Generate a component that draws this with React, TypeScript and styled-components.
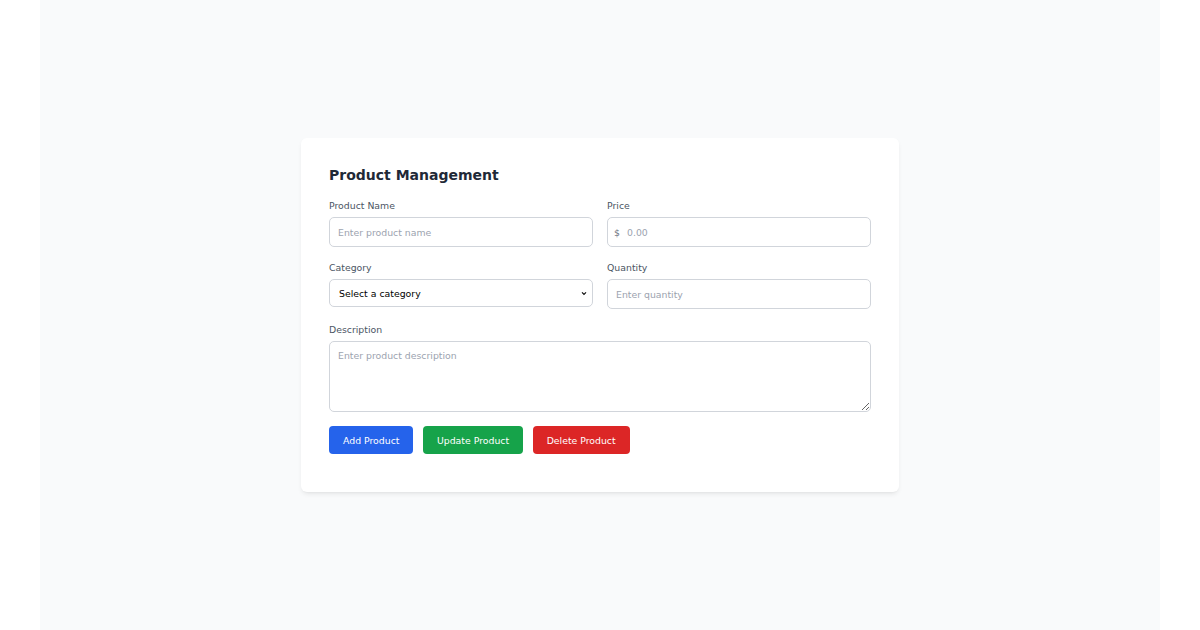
import styled, { createGlobalStyle } from "styled-components";

const GlobalStyle = createGlobalStyle`
  * { box-sizing: border-box; }
  body {
    margin: 0;
    background: #ffffff;
    font-family: "DejaVu Sans", "Noto Sans", sans-serif;
  }
`;

const Page = styled.div`
  width: 1120px;
  min-height: 630px;
  margin: 0 auto;
  background: #f9fafb;
  display: flex;
  align-items: center;
  justify-content: center;
`;

const Card = styled.div`
  width: 598px;
  background: #ffffff;
  border-radius: 6px;
  padding: 27px 28px 38px;
  box-shadow: 0 3px 5px -1px rgba(0, 0, 0, 0.08), 0 2px 3px -2px rgba(0, 0, 0, 0.06);
`;

const Title = styled.h2`
  margin: 0 0 14px;
  font-size: 14px;
  line-height: 20px;
  font-weight: 700;
  color: #1f2937;
`;

const FieldGrid = styled.div`
  display: grid;
  grid-template-columns: 1fr 1fr;
  column-gap: 14px;
  row-gap: 14px;
  margin-bottom: 14px;
  align-items: start;
`;

const Field = styled.div`
  display: flex;
  flex-direction: column;
`;

const Label = styled.label`
  font-size: 9.33px;
  line-height: 14px;
  color: #4b5563;
  margin-bottom: 4px;
`;

const TextInput = styled.input<{ $padLeft?: number }>`
  height: 30px;
  width: 100%;
  border: 1px solid #d1d5db;
  border-radius: 5px;
  padding: 0 8px 0 ${({ $padLeft }) => $padLeft ?? 8}px;
  font-family: inherit;
  font-size: 9.33px;
  color: #111827;
  background: #ffffff;
  outline: none;
  &::placeholder {
    color: #9ca3af;
  }
`;

const AdornedWrap = styled.div`
  position: relative;
`;

const Currency = styled.span`
  position: absolute;
  left: 7px;
  top: 50%;
  transform: translateY(-50%);
  font-size: 9.33px;
  color: #6b7280;
`;

const Select = styled.select`
  appearance: none;
  -webkit-appearance: none;
  display: block;
  height: 28px;
  width: 100%;
  border: 1px solid #d1d5db;
  border-radius: 5px;
  padding: 0 20px 0 9px;
  font-family: inherit;
  font-size: 9.33px;
  color: #000000;
  background: #ffffff;
  outline: none;
`;

const Chevron = styled.svg`
  position: absolute;
  right: 6px;
  top: 50%;
  width: 6px;
  height: 6px;
  transform: translateY(-40%);
  pointer-events: none;
`;

const TextArea = styled.textarea`
  display: block;
  width: 100%;
  height: 71px;
  border: 1px solid #d1d5db;
  border-radius: 5px;
  padding: 7px 8px;
  font-family: inherit;
  font-size: 9.33px;
  line-height: 14px;
  color: #111827;
  outline: none;
  &::placeholder {
    color: #9ca3af;
  }
`;

const Actions = styled.div`
  display: flex;
  gap: 9.5px;
  margin-top: 14px;
`;

const Button = styled.button<{ $color: string }>`
  height: 28px;
  padding: 0 14px;
  border: none;
  border-radius: 4px;
  background: ${({ $color }) => $color};
  color: #ffffff;
  font-family: inherit;
  font-size: 9.33px;
  cursor: pointer;
`;

export default function App() {
  return (
    <>
      <GlobalStyle />
      <Page>
        <Card>
          <Title>Product Management</Title>
          <FieldGrid>
            <Field>
              <Label>Product Name</Label>
              <TextInput placeholder="Enter product name" />
            </Field>
            <Field>
              <Label>Price</Label>
              <AdornedWrap>
                <Currency>$</Currency>
                <TextInput $padLeft={19} placeholder="0.00" />
              </AdornedWrap>
            </Field>
            <Field>
              <Label>Category</Label>
              <AdornedWrap>
                <Select defaultValue="">
                  <option value="">Select a category</option>
                  <option value="electronics">Electronics</option>
                  <option value="clothing">Clothing</option>
                  <option value="home">Home</option>
                </Select>
                <Chevron viewBox="0 0 6 6">
                  <path d="M1 1.8 L3 3.8 L5 1.8" fill="none" stroke="#111" strokeWidth="1.3" />
                </Chevron>
              </AdornedWrap>
            </Field>
            <Field>
              <Label>Quantity</Label>
              <TextInput placeholder="Enter quantity" />
            </Field>
          </FieldGrid>
          <Field>
            <Label>Description</Label>
            <TextArea placeholder="Enter product description" />
          </Field>
          <Actions>
            <Button $color="#2563eb">Add Product</Button>
            <Button $color="#16a34a">Update Product</Button>
            <Button $color="#dc2626">Delete Product</Button>
          </Actions>
        </Card>
      </Page>
    </>
  );
}
